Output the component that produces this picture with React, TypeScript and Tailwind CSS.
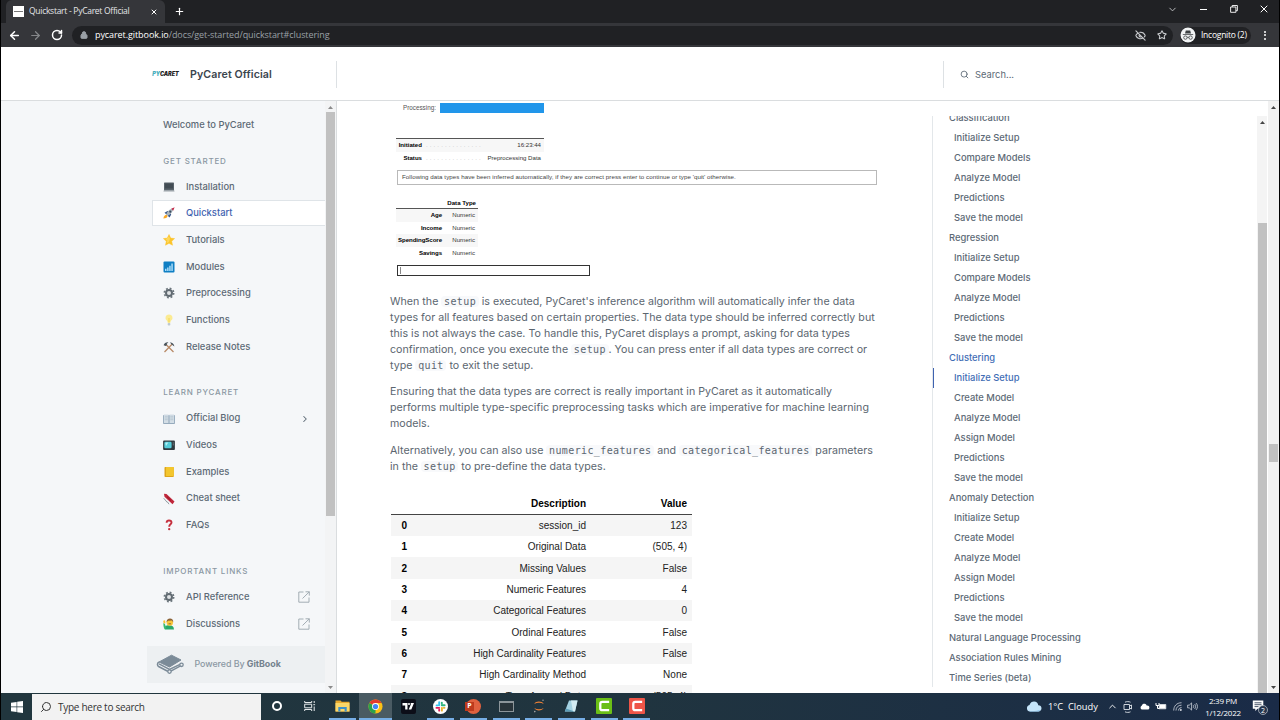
import React from 'react';
import { ArrowLeft, ArrowRight, ChevronDown, ChevronRight, ChevronUp, EyeOff, Lock, Plus, RotateCw, Search, Star, X } from 'lucide-react';

type IconName =
  | 'laptop' | 'rocket' | 'star' | 'signal' | 'gear' | 'bulb' | 'tools'
  | 'book' | 'tv' | 'ledger' | 'knife' | 'question' | 'person';

interface NavItem {
  icon: IconName;
  label: string;
  active?: boolean;
  trailing?: 'chevron' | 'external';
}

interface NavGroup {
  title: string;
  items: NavItem[];
}

const navGroups: NavGroup[] = [
  {
    title: 'GET STARTED',
    items: [
      { icon: 'laptop', label: 'Installation' },
      { icon: 'rocket', label: 'Quickstart', active: true },
      { icon: 'star', label: 'Tutorials' },
      { icon: 'signal', label: 'Modules' },
      { icon: 'gear', label: 'Preprocessing' },
      { icon: 'bulb', label: 'Functions' },
      { icon: 'tools', label: 'Release Notes' },
    ],
  },
  {
    title: 'LEARN PYCARET',
    items: [
      { icon: 'book', label: 'Official Blog', trailing: 'chevron' },
      { icon: 'tv', label: 'Videos' },
      { icon: 'ledger', label: 'Examples' },
      { icon: 'knife', label: 'Cheat sheet' },
      { icon: 'question', label: 'FAQs' },
    ],
  },
  {
    title: 'IMPORTANT LINKS',
    items: [
      { icon: 'gear', label: 'API Reference', trailing: 'external' },
      { icon: 'person', label: 'Discussions', trailing: 'external' },
    ],
  },
];

interface TocItem {
  label: string;
  level: 1 | 2;
  active?: boolean;
  marker?: boolean;
}

const toc: TocItem[] = [
  { label: 'Classification', level: 1 },
  { label: 'Initialize Setup', level: 2 },
  { label: 'Compare Models', level: 2 },
  { label: 'Analyze Model', level: 2 },
  { label: 'Predictions', level: 2 },
  { label: 'Save the model', level: 2 },
  { label: 'Regression', level: 1 },
  { label: 'Initialize Setup', level: 2 },
  { label: 'Compare Models', level: 2 },
  { label: 'Analyze Model', level: 2 },
  { label: 'Predictions', level: 2 },
  { label: 'Save the model', level: 2 },
  { label: 'Clustering', level: 1, active: true },
  { label: 'Initialize Setup', level: 2, active: true, marker: true },
  { label: 'Create Model', level: 2 },
  { label: 'Analyze Model', level: 2 },
  { label: 'Assign Model', level: 2 },
  { label: 'Predictions', level: 2 },
  { label: 'Save the model', level: 2 },
  { label: 'Anomaly Detection', level: 1 },
  { label: 'Initialize Setup', level: 2 },
  { label: 'Create Model', level: 2 },
  { label: 'Analyze Model', level: 2 },
  { label: 'Assign Model', level: 2 },
  { label: 'Predictions', level: 2 },
  { label: 'Save the model', level: 2 },
  { label: 'Natural Language Processing', level: 1 },
  { label: 'Association Rules Mining', level: 1 },
  { label: 'Time Series (beta)', level: 1 },
];

const setupRows = [
  ['session_id', '123'],
  ['Original Data', '(505, 4)'],
  ['Missing Values', 'False'],
  ['Numeric Features', '4'],
  ['Categorical Features', '0'],
  ['Ordinal Features', 'False'],
  ['High Cardinality Features', 'False'],
  ['High Cardinality Method', 'None'],
  ['Transformed Data', '(505, 4)'],
];

const dataTypes = ['Age', 'Income', 'SpendingScore', 'Savings'];

const NavIcon: React.FC<{ name: IconName }> = ({ name }) => {
  switch (name) {
    case 'laptop':
      return (
        <svg viewBox="0 0 12 12" className="size-3">
          <rect x="1" y="1.500" width="10" height="7.500" rx=".6" fill="#59636b" />
          <path d="M2 2.500h8v5H2z" fill="#424c54" />
          <path d="M1 9h10l.6 1.600H.4z" fill="#9aa2a8" />
        </svg>
      );
    case 'rocket':
      return (
        <svg viewBox="0 0 12 12" className="size-3">
          <path d="M.4 11.600C.8 9 2 8 3.600 7.600l1 1.400C4 10.800 2.500 11.400.4 11.600z" fill="#f9a825" />
          <path d="M1.500 5.800 4.500 4l1.500.6-2.400 3zM6.600 10.600 8.200 7.600 7.400 6 4.600 8.800z" fill="#3c5a8c" />
          <path d="M3.200 7.200C4.500 4 7 1.800 10.600 1c-.6 3.600-2.800 6.400-6 7.800z" fill="#aab6bd" />
          <path d="M8.300 1.800 11.600.3 10.200 3.800z" fill="#c62848" />
          <circle cx="7.300" cy="4.700" r="1.100" fill="#3b4c60" />
        </svg>
      );
    case 'star':
      return (
        <svg viewBox="0 0 12 12" className="size-3">
          <path d="m6 .5 1.700 3.600 3.900.5-2.900 2.700.8 3.900L6 9.300l-3.500 1.900.8-3.900L.4 4.600l3.900-.5z" fill="#fcc42c" stroke="#fcc42c" strokeWidth=".5" strokeLinejoin="round" />
          <path d="m6 2.500 1 2.300-1 3.200-2.200 1.200.4-2.500L2.600 5.200z" fill="#fdd75a" />
        </svg>
      );
    case 'signal':
      return (
        <svg viewBox="0 0 12 12" className="size-3">
          <rect x=".5" y=".5" width="11" height="11" rx="1" fill="#0f7fc4" />
          <path d="M2 7.800h1.500V10H2zM4.100 6.500h1.500V10H4.100zM6.200 4.800h1.500V10H6.200zM8.300 2.500h1.500V10H8.300z" fill="#a9dcf8" />
        </svg>
      );
    case 'gear':
      return (
        <svg viewBox="0 0 12 12" className="size-3">
          <circle cx="6" cy="6" r="4.700" fill="none" stroke="#6b757c" strokeWidth="1.600" strokeDasharray="1.850 1.850" />
          <circle cx="6" cy="6" r="3" fill="#dfe3e5" stroke="#616b72" strokeWidth="2" />
        </svg>
      );
    case 'bulb':
      return (
        <svg viewBox="0 0 12 12" className="size-3">
          <path d="M6 .4a3.500 3.500 0 0 1 2 6.400c-.5.500-.6 1.200-.6 2H4.600c0-.8-.1-1.500-.6-2A3.500 3.500 0 0 1 6 .4z" fill="#fbeb93" />
          <path d="M5.500 4h1v4.500h-1z" fill="#f6d550" />
          <rect x="4.700" y="9" width="2.600" height="2.500" rx=".8" fill="#bfc9ce" />
        </svg>
      );
    case 'tools':
      return (
        <svg viewBox="0 0 12 12" className="size-3">
          <path d="m3 3.500 7.500 7.500M9 3.200 1.500 11" stroke="#b98b68" strokeWidth="1.300" />
          <path d="M.6 4.200C1.300 2 3 .9 5.400 1.200L3.600 2.900l.5.800-1.300 1.200zM7 1.300c2.400.2 4 1.600 4.400 4.300L8.300 3.200z" fill="#4a555d" />
        </svg>
      );
    case 'book':
      return (
        <svg viewBox="0 0 12 12" className="size-3">
          <path d="M.2 2.200h11.600v8.600H.2z" fill="#7f98ae" />
          <path d="M.9 1.600h4.700v8.300H.9zM6.400 1.600h4.700v8.300H6.400z" fill="#d3dee6" />
          <path d="M1.800 3.300h3M1.800 5h3M1.800 6.700h3M7.300 3.300h3M7.300 5h3M7.300 6.700h3" stroke="#a9bac7" strokeWidth=".6" />
        </svg>
      );
    case 'tv':
      return (
        <svg viewBox="0 0 12 12" className="size-3">
          <rect x=".1" y="1.500" width="11.800" height="9.500" rx=".9" fill="#303a40" />
          <rect x="1.300" y="2.800" width="7.300" height="6.500" rx="1.300" fill="#55cdda" />
          <path d="M2.300 4c1-.6 2-.6 3-.5L3 7z" fill="#b5f0f4" />
          <path d="M9.700 4h1.200M9.700 5.800h1.200" stroke="#87939a" strokeWidth=".8" />
        </svg>
      );
    case 'ledger':
      return (
        <svg viewBox="0 0 12 12" className="size-3">
          <rect x="1.500" y="1" width="9.300" height="10" rx=".7" fill="#dda51b" />
          <rect x="3" y="1" width="7.800" height="9" rx=".5" fill="#f3c62e" />
        </svg>
      );
    case 'knife':
      return (
        <svg viewBox="0 0 12 12" className="size-3">
          <path d="M1 .8 3.500 1 11.500 8.600 9.500 11.200 1.500 3.800z" fill="#c0263a" />
          <path d="m.7 5.200 3.600 4.300M4.200 8.600l1.800 2.600" stroke="#8b969d" strokeWidth=".9" />
          <path d="m4 3.600 3.800 3.700" stroke="#7e1526" strokeWidth=".8" />
        </svg>
      );
    case 'question':
      return (
        <svg viewBox="0 0 12 12" className="size-3">
          <path d="M3.600 3.700C3.700 2 4.700 1.500 6 1.500s2.500.8 2.500 2.100C8.500 5.300 6.200 5.400 6.200 7.700" fill="none" stroke="#c5303e" strokeWidth="1.900" />
          <circle cx="6.200" cy="10.200" r="1.150" fill="#c5303e" />
        </svg>
      );
    case 'person':
      return (
        <svg viewBox="0 0 12 12" className="size-3">
          <path d="M2 11.500V8.700c1-1.200 2-1.400 4.300-1.400 3 0 4.500 1 4.700 4.200z" fill="#2ba96b" />
          <path d="M.3 5.200c1 0 1.400.3 1.700 1l1.200 3.400-1.300 1.900C.7 10.500.5 8 .3 5.200z" fill="#3aba6f" />
          <path d="M.2 2.800 2 2.200l.4 3H.6z" fill="#fbc02d" />
          <circle cx="6.800" cy="4.500" r="3.200" fill="#fbc73a" />
          <path d="M3.600 4.300C3.400 1.600 5 .4 7 .4s3.600 1.400 3.200 4L9 2.600 5 2.700z" fill="#8a6238" />
          <path d="M5.500 5.800h2.600" stroke="#6b4a35" strokeWidth=".7" />
        </svg>
      );
  }
};

const ExternalIcon = () => (
  <svg viewBox="0 0 12 12" className="size-3" fill="none" stroke="#9aa5ad" strokeWidth=".9">
    <path d="M5.500 1H.8v10.200H11V6.500M7.500.8h3.800v3.800M11.300.8 4.500 7.500" />
  </svg>
);

const GitBookIcon = () => (
  <svg viewBox="0 0 28 20" className="h-5 w-7 shrink-0">
    <path d="M3 8 15.500 1.200 25 6 13.500 13z" fill="#7b8b98" stroke="#7b8b98" strokeLinejoin="round" />
    <path d="M3 8C1 9 1 11.700 2.600 12.500l9.500 5M3 9.800l10.500 5.600 10.500-5" fill="none" stroke="#7b8b98" strokeWidth="1.500" />
    <path d="M14.800 17.200 25 11.600" fill="none" stroke="#7b8b98" strokeWidth="1.500" />
    <circle cx="13.500" cy="17.600" r="1.700" fill="#eef1f3" stroke="#7b8b98" strokeWidth="1.300" />
    <circle cx="25.500" cy="10.800" r="1.700" fill="#eef1f3" stroke="#7b8b98" strokeWidth="1.300" />
  </svg>
);

const BrowserChrome = () => (
  <div className="font-['Open_Sans',sans-serif] text-white">
    {/* Tab strip */}
    <div className="flex h-[23px] items-start bg-[#202124]">
      <div className="ml-[5px] flex h-[23px] w-[159px] items-center rounded-t-md bg-[#35363a] pr-[6px] pl-[7px]">
        <div className="flex size-[11px] items-center bg-white px-px">
          <div className="h-px w-full bg-[#777]" />
        </div>
        <span className="ml-[5px] w-[121px] whitespace-nowrap text-[8.500px] tracking-[-0.28px] text-[#e4e5e7]">
          Quickstart - PyCaret Official
        </span>
        <X className="size-2 shrink-0" strokeWidth={3} />
      </div>
      <Plus className="mt-[6px] ml-[9px] size-[11px]" strokeWidth={2.600} />
      <div className="mt-[3px] ml-auto flex items-center pr-[9px]">
        <ChevronDown className="size-[11px] text-[#c5c6c8]" />
        <div className="ml-[22px] h-px w-[7px] bg-white" />
        <svg viewBox="0 0 8 8" className="ml-[23px] size-2" fill="none" stroke="#fff" strokeWidth=".9">
          <path d="M.6 2h5.300v5.300H.6zM2.200 2V.5h5.200v5.200H5.900" />
        </svg>
        <X className="ml-[20px] size-[12px]" strokeWidth={2} />
      </div>
    </div>
    {/* Address bar */}
    <div className="flex h-6 items-center bg-[#35363a] pl-[7px]">
      <ArrowLeft className="size-[13px]" strokeWidth={2.800} />
      <ArrowRight className="ml-[8px] size-[13px] text-[#85878a]" strokeWidth={2.200} />
      <RotateCw className="ml-[9px] size-[12px]" strokeWidth={3} />
      <div className="ml-[9px] flex h-[19px] w-[1101px] items-center rounded-full bg-[#202124] pr-[6px] pl-[8px]">
        <Lock className="size-[8px] text-[#9aa0a6]" fill="#9aa0a6" strokeWidth={3} />
        <span className="ml-[7px] whitespace-nowrap text-[9px] tracking-[-0.08px] text-[#9aa0a6]">
          <span className="text-white">pycaret.gitbook.io</span>/docs/get-started/quickstart#clustering
        </span>
        <EyeOff className="ml-auto size-[11px] text-[#c7c9cc]" strokeWidth={2.500} />
        <Star className="ml-[11px] size-[10px] text-[#c7c9cc]" strokeWidth={2.500} />
      </div>
      <div className="ml-[7px] flex h-[17px] w-[71px] items-center rounded-full bg-[#202124]">
        <svg viewBox="0 0 16 16" className="size-[16px] shrink-0">
          <circle cx="8" cy="8" r="7.500" fill="#f1f3f4" />
          <path d="M5 6.500 5.800 3.500h4.400l.8 3zM2.800 7.200h10.400v.9H2.800z" fill="#3c4043" />
          <path d="M3.700 10.600a1.700 1.700 0 1 0 3.400 0 1.700 1.700 0 1 0-3.400 0zM8.900 10.600a1.700 1.700 0 1 0 3.400 0 1.700 1.700 0 1 0-3.400 0zM7.100 10.300h1.800" fill="none" stroke="#3c4043" strokeWidth=".8" />
        </svg>
        <span className="ml-[5px] whitespace-nowrap text-[8.500px] tracking-[-0.25px]">Incognito (2)</span>
      </div>
      <div className="ml-[13px] flex flex-col gap-[1.500px]">
        <div className="size-[2px] rounded-full bg-white" />
        <div className="size-[2px] rounded-full bg-white" />
        <div className="size-[2px] rounded-full bg-white" />
      </div>
    </div>
  </div>
);

const Header = () => (
  <header className="flex h-[54px] items-center border-b border-[#dadddf] bg-white pt-[2px]">
    <div className="ml-[151px] flex w-[184px] items-center">
      <div className="flex w-[27px] justify-center font-['Inter',sans-serif] text-[5.500px] leading-none font-black tracking-[-0.1px] italic">
        <span className="text-[#47aebd]">PY</span>
        <span className="text-[#222]">CARET</span>
      </div>
      <span className="ml-[11px] whitespace-nowrap text-[10.670px] font-semibold tracking-[0.08px] text-[#3b454e]">PyCaret Official</span>
    </div>
    <div className="h-[27px] w-px bg-[#dde1e4]" />
    <div className="ml-[606px] h-[27px] w-px bg-[#dde1e4]" />
    <Search className="ml-[16px] size-[9px] text-[#5c6975]" strokeWidth={2.300} />
    <span className="ml-[6px] text-[9.330px] text-[#5c6975]">Search...</span>
  </header>
);

const Sidebar = () => (
  <aside className="flex w-[324px] shrink-0 flex-col bg-[#f5f7f9] pt-[10.600px]">
    <div className="flex h-[26.670px] items-center pl-[162px] text-[9.400px] font-medium text-[#5c6975]">Welcome to PyCaret</div>
    {navGroups.map((group, i) => (
      <div key={group.title}>
        <div className={`flex items-end pl-[162.300px] text-[8px] font-medium tracking-[0.8px] text-[#8b98a3] ${i === 0 ? 'h-[34.800px]' : 'h-[45.330px]'}`}>
          <span className="h-[18.500px] leading-[12px]">{group.title}</span>
        </div>
        {group.items.map((item) => (
          <div
            key={item.label}
            className={`ml-[151px] flex h-[26.670px] items-center border-y border-l pt-[0.500px] pr-[15px] pl-[10px] text-[9.400px] font-medium ${
              item.active ? 'border-[#dfe4e8] bg-white text-[#3f63b0]' : 'border-transparent text-[#5c6975]'
            }`}
          >
            <NavIcon name={item.icon} />
            <span className="ml-[11px]">{item.label}</span>
            <span className="ml-auto">
              {item.trailing === 'chevron' && <ChevronRight className="size-[10px]" strokeWidth={2.500} />}
              {item.trailing === 'external' && <ExternalIcon />}
            </span>
          </div>
        ))}
      </div>
    ))}
    <div className="mt-[8.700px] ml-[146px] flex h-[37px] items-center bg-[#edf0f2] pl-[9px] text-[8.900px] text-[#8b98a3]">
      <GitBookIcon />
      <span className="ml-[10.500px] font-medium tracking-[-0.05px] whitespace-nowrap">
        Powered By <b className="font-bold text-[#74828e]">GitBook</b>
      </span>
    </div>
  </aside>
);

const Arrow: React.FC<{ down?: boolean; dim?: boolean }> = ({ down, dim }) => (
  <svg viewBox="0 0 5 3" className={`h-[3px] w-[5px] ${down ? 'rotate-180' : ''}`}>
    <path d="M0 3 2.500 0 5 3z" fill={dim ? '#8b8b8b' : '#444'} />
  </svg>
);

const Output = () => (
  <div className="font-['Liberation_Sans',sans-serif] text-[6.100px] text-[#333]">
    <div className="flex h-[10px] items-center">
      <span className="w-[49px] pl-[13px] text-[6.300px] text-[#555]">Processing:</span>
      <div className="ml-[1px] h-[10px] w-[104px] bg-[#2196ea]" />
    </div>
    <div className="mt-[25px] ml-[6px] w-[148px] border-t border-[#555] leading-[12.500px] whitespace-nowrap">
      <div className="flex bg-[#f7f7f7] pr-[3px]">
        <b className="w-[26px] text-right text-black">Initiated</b>
        <span className="ml-[4px] tracking-[0.2px] text-[#bbb]">. . . . . . . . . . . . . . .</span>
        <span className="ml-auto">16:23:44</span>
      </div>
      <div className="flex pr-[3px]">
        <b className="w-[26px] text-right text-black">Status</b>
        <span className="ml-[4px] tracking-[0.2px] text-[#bbb]">. . . . . . . . . . . . . . .</span>
        <span className="ml-auto">Preprocessing Data</span>
      </div>
    </div>
    <div className="mt-[5.500px] ml-[7px] flex h-[15px] w-[480px] items-center border border-[#b9b9b9] pl-1 text-[6.200px] tracking-[0.050px] whitespace-nowrap text-[#444]">
      Following data types have been inferred automatically, if they are correct press enter to continue or type 'quit' otherwise.
    </div>
    <div className="mt-[12.500px] ml-[6px] w-[82px] leading-[12.500px]">
      <div className="h-[12px] border-b border-[#555] pr-[2px] text-right font-bold text-black">Data Type</div>
      {dataTypes.map((name) => (
        <div key={name} className="flex pr-[3px] odd:bg-white even:bg-[#f7f7f7]">
          <b className="w-[46px] text-right tracking-[-0.050px] text-black">{name}</b>
          <span className="ml-auto">Numeric</span>
        </div>
      ))}
    </div>
    <div className="mt-[5.500px] ml-[7px] flex h-[11px] w-[193px] items-center border border-[#333] pl-[2px]">
      <div className="h-[7px] w-px bg-[#888]" />
    </div>
  </div>
);

const Code: React.FC<{ children: string }> = ({ children }) => (
  <code className="rounded-sm bg-[#f8f9fb] px-[2.670px] font-['DejaVu_Sans_Mono',monospace] text-[10px] tracking-[0.380px]">{children}</code>
);

const SetupTable = () => (
  <div className="mt-[19px] ml-[1px] w-[301px] font-['Liberation_Sans',sans-serif] text-[10px] text-[#222]">
    <div className="flex h-[21px] items-center border-b border-[#444] pr-[5px] text-right font-bold text-black">
      <span className="w-[195px]">Description</span>
      <span className="ml-auto">Value</span>
    </div>
    {setupRows.map(([label, value], i) => (
      <div key={label} className={`flex h-[21.330px] items-center pr-[5px] text-right ${i % 2 === 0 ? 'bg-[#f5f5f5]' : 'bg-white'}`}>
        <b className="w-[16px] text-black">{i}</b>
        <span className="w-[179px]">{label}</span>
        <span className="ml-auto">{value}</span>
      </div>
    ))}
  </div>
);

const Article = () => (
  <main className="w-[542px] shrink-0 pt-[2px]">
    <Output />
    <div className="mt-[18px] space-y-[10.670px] text-[10.670px] leading-4 tracking-[0.01px] whitespace-nowrap text-[#5b6670]">
      <p>
        When the <Code>setup</Code> is executed, PyCaret's inference algorithm will automatically infer the data<br />
        types for all features based on certain properties. The data type should be inferred correctly but<br />
        this is not always the case. To handle this, PyCaret displays a prompt, asking for data types<br />
        confirmation, once you execute the <Code>setup</Code>. You can press enter if all data types are correct or<br />
        type <Code>quit</Code> to exit the setup.
      </p>
      <p>
        Ensuring that the data types are correct is really important in PyCaret as it automatically<br />
        performs multiple type-specific preprocessing tasks which are imperative for machine learning<br />
        models.
      </p>
      <p>
        Alternatively, you can also use <Code>numeric_features</Code> and <Code>categorical_features</Code> parameters<br />
        in the <Code>setup</Code> to pre-define the data types.
      </p>
    </div>
    <SetupTable />
  </main>
);

const TableOfContents = () => (
  <nav className="mt-[15px] h-[571px] w-[325px] shrink-0 overflow-hidden border-l border-[#e3e7ea] text-[9.400px] font-medium text-[#5c6975]">
    <div className="-mt-2">
      {toc.map((item, i) => (
        <div key={i} className={`flex h-5 items-center ${item.active ? 'text-[#3f6db5]' : ''}`}>
          <div className={`h-5 w-px ${item.marker ? 'bg-[#3f63b0]' : ''}`} />
          <span className={`pt-px ${item.level === 1 ? 'ml-[15px]' : 'ml-[20px]'}`}>{item.label}</span>
        </div>
      ))}
    </div>
  </nav>
);

const TaskButton: React.FC<{ children: React.ReactNode; open?: boolean; active?: boolean }> = ({ children, open, active }) => (
  <div className={`flex h-full w-[32.700px] flex-col items-center ${active ? 'bg-[#4a5b63]' : ''}`}>
    <div className="flex flex-1 items-center pt-px">{children}</div>
    <div className={`h-[2px] ${active ? 'w-full' : 'w-[27px]'} ${open ? 'bg-[#76aee6]' : ''}`} />
  </div>
);

const Taskbar = () => (
  <footer className="flex h-[27px] items-center bg-linear-to-r from-[#21363e] via-[#20343f] to-[#1a2b47] font-['Open_Sans',sans-serif] text-white">
    <div className="flex w-[31px] justify-center">
      <svg viewBox="0 0 12 12" className="size-[12px]" fill="#fff">
        <path d="M0 1.700 5.600.9v4.700H0zM6.200.8 12 0v5.600H6.200zM0 6.200h5.600v4.900L0 10.300zM6.200 6.200H12V12l-5.800-.8z" />
      </svg>
    </div>
    <div className="flex h-[26px] w-[229px] items-center self-end bg-[#f2f2f2] pl-2 text-[#333]">
      <Search className="size-[12px] -scale-x-100" strokeWidth={2} />
      <span className="ml-[6px] pt-px text-[10px] tracking-[-0.28px] whitespace-nowrap">Type here to search</span>
    </div>
    <TaskButton>
      <div className="size-[10px] rounded-full border-2 border-white" />
    </TaskButton>
    <TaskButton>
      <svg viewBox="0 0 12 12" className="size-3" fill="none" stroke="#e6eaec" strokeWidth="1">
        <path d="M.7 1v1.500h7V1M.7 4.200h7v3.600h-7zM.7 11V9.500h7V11M10.200 1v2M10.200 6.500V11M9.300 4.700h1.800" />
      </svg>
    </TaskButton>
    <TaskButton open>
      <svg viewBox="0 0 15 12" className="h-3 w-[15px]">
        <path d="M.5.5h5l1.200 1.300h7.800v9.700H.5z" fill="#e8a92e" />
        <path d="M.5 3h14v8.500H.5z" fill="#fbd769" />
        <path d="M3.300 11.500V7h8.400v4.500H9.600V9H5.400v2.500z" fill="#3f91c9" />
      </svg>
    </TaskButton>
    <TaskButton open active>
      <svg viewBox="0 0 16 16" className="size-[15px]">
        <circle cx="8" cy="8" r="7.500" fill="#fbc116" />
        <path d="M8 8 1.500 4.250A7.500 7.500 0 0 1 14.500 4.250H8z" fill="#e33b2e" />
        <path d="M8 8v7.500A7.500 7.500 0 0 1 1.500 4.250z" fill="#2aa24c" />
        <circle cx="8" cy="8" r="3.700" fill="#fff" />
        <circle cx="8" cy="8" r="2.800" fill="#4285f4" />
      </svg>
    </TaskButton>
    <TaskButton>
      <svg viewBox="0 0 15 15" className="size-[15px]">
        <rect width="15" height="15" rx="2" fill="#0c0e18" />
        <path d="M1.500 4h5v6.500H4.200v-4H1.500zM9.700 4h3.300l-2.700 6.500H7.700L9.800 5.600z" fill="#fff" />
        <circle cx="8" cy="5" r="1" fill="#fff" />
      </svg>
    </TaskButton>
    <TaskButton open>
      <svg viewBox="0 0 16 16" className="size-[15px]" strokeWidth="2" strokeLinecap="round">
        <circle cx="8" cy="8" r="8" fill="#fff" />
        <path d="M6.600 3.500v3.200M3.800 6.800h1" stroke="#36c5f0" />
        <path d="M9.400 6.600h3M9.400 3.800v1" stroke="#2eb67d" />
        <path d="M9.500 9.400v3M11.500 9.400h.8" stroke="#ecb22e" />
        <path d="M3.600 9.400h3M6.600 11.500v.9" stroke="#e01e5a" />
      </svg>
    </TaskButton>
    <TaskButton open>
      <div className="flex size-[15px] items-center rounded-full bg-[#e0613f]">
        <span className="-ml-[1px] flex size-[9px] items-center justify-center bg-[#bd3a1d] text-[7px] font-bold">P</span>
      </div>
    </TaskButton>
    <TaskButton open>
      <div className="h-[11px] w-[15px] border border-t-2 border-[#8c959a] bg-[#29343a]" />
    </TaskButton>
    <TaskButton open>
      <svg viewBox="0 0 12 14" className="h-[14px] w-3">
        <path d="M1.300 5C2.700 1.800 9 1.800 10.700 5 8 3.400 4 3.400 1.300 5zM1.300 9c1.400 3.200 7.700 3.200 9.400 0-2.700 1.600-6.700 1.600-9.400 0z" fill="#ee8136" />
        <circle cx="10" cy="1.200" r=".7" fill="#aaa" />
        <circle cx="1.800" cy="12.600" r=".8" fill="#aaa" />
      </svg>
    </TaskButton>
    <TaskButton open>
      <svg viewBox="0 0 15 14" className="h-[14px] w-[15px]">
        <path d="M5 1.500h8.500L11 12.500H.8z" fill="#a4d2e2" />
        <path d="M7 1.500h6.500L11 12.500H9z" fill="#d4edf4" />
        <path d="M.8 12.500 2 9.500l7 2.500 2 .5z" fill="#5d9eb8" />
      </svg>
    </TaskButton>
    <TaskButton open>
      <svg viewBox="0 0 16 16" className="size-[16px]">
        <rect width="16" height="16" rx="1" fill="#6bbf16" />
        <path d="M12 5V3.800H6.300a2 2 0 0 0-2 2v4.400a2 2 0 0 0 2 2H12V11" fill="none" stroke="#fff" strokeWidth="2.300" />
      </svg>
    </TaskButton>
    <TaskButton open>
      <svg viewBox="0 0 16 16" className="size-[16px]">
        <rect width="16" height="16" rx="1" fill="#ee5548" />
        <path d="M12 5V3.800H6.300a2 2 0 0 0-2 2v4.400a2 2 0 0 0 2 2H12V11" fill="none" stroke="#fff" strokeWidth="2.300" />
      </svg>
    </TaskButton>

    {/* System tray */}
    <div className="ml-auto flex items-center pr-[11px]">
      <svg viewBox="0 0 16 11" className="h-[11px] w-4">
        <path d="M4 10.500A3.300 3.300 0 0 1 3.500 4C4.300 1.500 6 .5 8 .5c2.500 0 4 1.500 4.300 3.800 2 0 3.200 1.300 3.200 3s-1.300 3.200-3 3.200z" fill="#c5e5fa" />
        <path d="M3 9.800c3 .5 8 .2 11.500-1-1 1.400-2 1.700-3 1.700H4z" fill="#8fc4ea" />
      </svg>
      <span className="ml-[6px] w-[49px] pt-px text-[9.300px] whitespace-pre">1°C  Cloudy</span>
      <ChevronUp className="ml-[10px] size-[11px]" strokeWidth={2} />
      <svg viewBox="0 0 10 12" className="ml-[5px] h-[12px] w-[10px]" fill="none" stroke="#dfe4ea" strokeWidth=".9">
        <path d="M1 3.500h5.500v5H1zM6.500 5l2-1v4l-2-1M2 1.200C3.500.4 6 .4 7.500 1.200M2 10.800c1.500.8 4 .8 5.500 0" />
      </svg>
      <svg viewBox="0 0 12 8" className="ml-[6px] h-[7px] w-[11px]">
        <path d="M3 7.500A2.500 2.500 0 0 1 2.800 3C3.500 1 5 .5 6.200.8c1.500.2 2 1.200 2.400 2.200 2-.2 3 .9 3 2.300 0 1.300-1 2.200-2.200 2.200z" fill="#fff" />
      </svg>
      <svg viewBox="0 0 12 9" className="ml-[5px] h-[9px] w-[12px]">
        <path d="M4.500 2.500h6.300v4.300H4z" fill="#fff" stroke="#dfe4ea" strokeWidth=".8" />
        <path d="M1 1v2.500h3V1M2.500 3.500v3h2" fill="none" stroke="#fff" />
      </svg>
      <svg viewBox="0 0 10 10" className="ml-[6px] size-[9px]" fill="none" stroke="#cdd3db" strokeWidth=".9">
        <path d="M.8 9.500C.8 4.500 4 .9 9.500.8M3.300 9.500c0-3.300 2.300-6 6.200-6M6 9.500c0-1.800 1.300-3.300 3.500-3.300" />
        <circle cx="8.600" cy="8.800" r=".8" fill="#fff" />
      </svg>
      <svg viewBox="0 0 12 10" className="ml-[5px] h-[9px] w-[11px]" fill="none" stroke="#cdd3db" strokeWidth=".9">
        <path d="M.6 3.500h1.800L5 1v8L2.400 6.500H.6zM6.800 3.500c.7.900.7 2.100 0 3M8.400 2.300c1.300 1.600 1.300 3.800 0 5.400M10 1.200c2 2.300 2 5.300 0 7.600" />
      </svg>
      <div className="ml-[7px] w-[36px] text-center text-[8px] leading-[11.500px] tracking-[-0.25px] whitespace-nowrap">
        <div>2:39 PM</div>
        <div>1/12/2022</div>
      </div>
      <svg viewBox="0 0 16 16" className="ml-[11px] size-4">
        <path d="M.8 1.500h10.500v8.300H5.500L3.300 12V9.800H.8z" fill="#fff" />
        <path d="M2.500 3.800h7M2.500 5.700h7M2.500 7.600h4" stroke="#1c2c45" strokeWidth=".8" />
        <circle cx="11" cy="11" r="4.500" fill="#27364e" stroke="#c3cad3" strokeWidth=".7" />
        <text x="11" y="13.500" textAnchor="middle" fontSize="7" fill="#fff">2</text>
      </svg>
    </div>
  </footer>
);

export default function App() {
  return (
    <div className="h-[720px] w-[1280px] overflow-hidden border-x border-black bg-white font-['Inter',sans-serif]">
      <BrowserChrome />
      <Header />
      <div className="flex h-[592px] overflow-hidden">
        <Sidebar />
        {/* Sidebar scrollbar */}
        <div className="flex w-[12px] shrink-0 flex-col items-center border-r border-[#dadddf] bg-[#f3f4f5] pt-[5px] pb-1">
          <Arrow dim />
          <div className="mt-[3px] h-[404px] w-[9px] bg-[#c1c1c1]" />
          <div className="mt-auto">
            <Arrow down dim />
          </div>
        </div>
        <div className="w-[53px] shrink-0" />
        <Article />
        <TableOfContents />
        {/* Contents scrollbar */}
        <div className="mt-[15px] flex w-[10px] shrink-0 flex-col items-center bg-[#f4f4f4] pt-[5px]">
          <Arrow />
          <div className="mt-[99px] w-[9px] flex-1 bg-[#c1c1c1]" />
        </div>
        {/* Page scrollbar */}
        <div className="ml-px flex w-[11px] shrink-0 flex-col items-center bg-[#f1f1f1] pt-[5px] pb-1">
          <Arrow />
          <div className="mt-[335px] h-[18px] w-[9px] bg-[#c1c1c1]" />
          <div className="mt-auto">
            <Arrow down />
          </div>
        </div>
      </div>
      <Taskbar />
    </div>
  );
}
